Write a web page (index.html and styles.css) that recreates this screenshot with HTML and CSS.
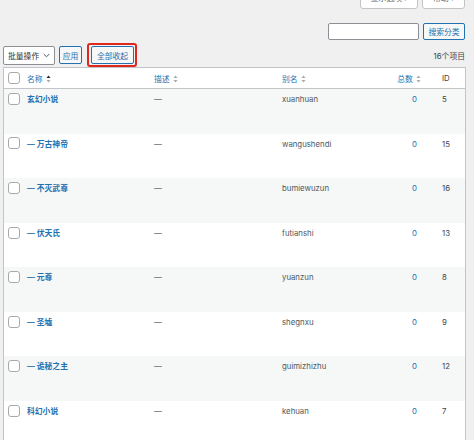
FILE: index.html
```html
<!DOCTYPE html>
<html lang="zh-CN">
<head>
    <meta charset="UTF-8">
    <meta name="viewport" content="width=device-width, initial-scale=1.0">
    <title>分类</title>
    <link rel="stylesheet" href="styles.css">
</head>
<body>
<div class="screen-meta">
    <button class="meta-tab">显示选项 <span class="tri">▾</span></button>
    <button class="meta-tab">帮助 <span class="tri">▾</span></button>
</div>

<div class="search-box">
    <input type="search" class="search-input">
    <button class="btn">搜索分类</button>
</div>

<div class="tablenav">
    <div class="bulk-select">批量操作
        <svg width="7" height="5" viewBox="0 0 7 5"><path d="M0.7 1 L3.5 3.8 L6.3 1" fill="none" stroke="#50575e" stroke-width="1"/></svg>
    </div>
    <button class="btn">应用</button>
    <div class="mark">
        <button class="btn">全部收起</button>
    </div>
    <div class="count">16个项目</div>
</div>

<table class="terms">
    <colgroup>
        <col style="width:17px">
        <col style="width:127px">
        <col style="width:128px">
        <col style="width:105px">
        <col style="width:55px">
        <col style="width:29px">
    </colgroup>
    <thead>
    <tr>
        <th class="cb"><span class="box"></span></th>
        <th><a>名称 <svg class="sort" viewBox="0 0 5 8"><path d="M2.5 0.5 L4.5 3 L0.5 3 Z" fill="#1d2327"/><path d="M0.5 5 L4.5 5 L2.5 7.5 Z" fill="#a7aaad"/></svg></a></th>
        <th><a>描述 <svg class="sort" viewBox="0 0 5 8"><path d="M2.5 0.5 L4.5 3 L0.5 3 Z" fill="#a7aaad"/><path d="M0.5 5 L4.5 5 L2.5 7.5 Z" fill="#a7aaad"/></svg></a></th>
        <th><a>别名 <svg class="sort" viewBox="0 0 5 8"><path d="M2.5 0.5 L4.5 3 L0.5 3 Z" fill="#a7aaad"/><path d="M0.5 5 L4.5 5 L2.5 7.5 Z" fill="#a7aaad"/></svg></a></th>
        <th class="num-h"><a>总数 <svg class="sort" viewBox="0 0 5 8"><path d="M2.5 0.5 L4.5 3 L0.5 3 Z" fill="#a7aaad"/><path d="M0.5 5 L4.5 5 L2.5 7.5 Z" fill="#a7aaad"/></svg></a></th>
        <th class="id">ID</th>
    </tr>
    </thead>
    <tbody>
    <tr>
        <td class="cb"><span class="box"></span></td>
        <td><a class="title">玄幻小说</a></td>
        <td class="muted">—</td>
        <td class="muted">xuanhuan</td>
        <td class="num"><a>0</a></td>
        <td class="id">5</td>
    </tr>
    <tr>
        <td class="cb"><span class="box"></span></td>
        <td><a class="title">— 万古神帝</a></td>
        <td class="muted">—</td>
        <td class="muted">wangushendi</td>
        <td class="num"><a>0</a></td>
        <td class="id">15</td>
    </tr>
    <tr>
        <td class="cb"><span class="box"></span></td>
        <td><a class="title">— 不灭武尊</a></td>
        <td class="muted">—</td>
        <td class="muted">bumiewuzun</td>
        <td class="num"><a>0</a></td>
        <td class="id">16</td>
    </tr>
    <tr>
        <td class="cb"><span class="box"></span></td>
        <td><a class="title">— 伏天氏</a></td>
        <td class="muted">—</td>
        <td class="muted">futianshi</td>
        <td class="num"><a>0</a></td>
        <td class="id">13</td>
    </tr>
    <tr>
        <td class="cb"><span class="box"></span></td>
        <td><a class="title">— 元尊</a></td>
        <td class="muted">—</td>
        <td class="muted">yuanzun</td>
        <td class="num"><a>0</a></td>
        <td class="id">8</td>
    </tr>
    <tr>
        <td class="cb"><span class="box"></span></td>
        <td><a class="title">— 圣墟</a></td>
        <td class="muted">—</td>
        <td class="muted">shegnxu</td>
        <td class="num"><a>0</a></td>
        <td class="id">9</td>
    </tr>
    <tr>
        <td class="cb"><span class="box"></span></td>
        <td><a class="title">— 诡秘之主</a></td>
        <td class="muted">—</td>
        <td class="muted">guimizhizhu</td>
        <td class="num"><a>0</a></td>
        <td class="id">12</td>
    </tr>
    <tr>
        <td class="cb"><span class="box"></span></td>
        <td><a class="title">科幻小说</a></td>
        <td class="muted">—</td>
        <td class="muted">kehuan</td>
        <td class="num"><a>0</a></td>
        <td class="id">7</td>
    </tr>
    </tbody>
</table>
</body>
</html>
```

FILE: styles.css
```css
* {
    box-sizing: border-box;
}

body,
html {
    margin: 0;
    padding: 0;
    background-color: #f0f0f1;
    font-family: "Inter", "Noto Sans CJK SC", sans-serif;
    font-size: 7.8px;
    color: #3c434a;
    overflow: hidden;
}

button,
input {
    font-family: inherit;
    font-size: inherit;
    margin: 0;
}

.screen-meta {
    display: flex;
    justify-content: flex-end;
    gap: 4px;
    padding-right: 9px;
    margin-top: -12px;
}

.meta-tab {
    height: 21px;
    padding: 0 0 2px;
    background-color: #fff;
    border: 1px solid #c3c4c7;
    border-radius: 0 0 3px 3px;
    color: #646970;
}

.meta-tab:first-child {
    width: 58px;
}

.meta-tab:last-child {
    width: 43px;
}

.tri {
    font-size: 6px;
}

.search-box {
    display: flex;
    justify-content: flex-end;
    gap: 4px;
    padding-right: 9px;
    margin-top: 14px;
}

.search-input {
    width: 91px;
    height: 17px;
    border: 1px solid #8c8f94;
    border-radius: 2px;
    background-color: #fff;
}

.btn {
    height: 18px;
    padding: 0 5px;
    background-color: #f6f7f7;
    border: 1px solid #2271b1;
    border-radius: 2px;
    color: #2271b1;
}

.search-box .btn {
    height: 17px;
    width: 42px;
    padding: 0;
}

.tablenav {
    display: flex;
    align-items: center;
    height: 24px;
    margin-top: 3px;
    padding: 0 9px 0 3px;
}

.bulk-select {
    display: flex;
    align-items: center;
    gap: 4px;
    width: 52px;
    height: 19px;
    padding-left: 4px;
    background-color: #fff;
    border: 1px solid #8c8f94;
    border-radius: 2px;
    color: #2c3338;
}

.tablenav > .btn {
    margin-left: 4px;
    width: 23px;
    padding: 0;
}

.mark {
    margin-left: 5px;
    padding: 1px 1px 1px 2px;
    border: 2px solid #e0271d;
    border-radius: 3px;
}

.mark .btn {
    width: 43px;
    padding: 0;
}

.count {
    margin-left: auto;
    color: #3c434a;
}

.terms {
    width: 463px;
    margin-left: 3px;
    table-layout: fixed;
    border-collapse: separate;
    border-spacing: 0;
    border: 1px solid #c3c4c7;
    background-color: #fff;
}

.terms th {
    height: 21px;
    padding: 0 6px;
    text-align: left;
    font-weight: normal;
    border-bottom: 1px solid #c3c4c7;
}

.terms th a {
    color: #2271b1;
}

.sort {
    width: 5px;
    height: 8px;
    margin-left: 1px;
    vertical-align: -1px;
}

.terms tbody tr {
    height: 44.57px;
}

.terms tbody tr:nth-child(odd) {
    background-color: #f6f7f7;
}

.terms td {
    vertical-align: top;
    padding: 4px 6px 0;
    line-height: 12px;
    white-space: nowrap;
}

.terms .cb {
    padding: 0;
    text-align: center;
}

.terms td.cb {
    padding-top: 3px;
}

.box {
    display: inline-block;
    width: 12px;
    height: 12px;
    margin-left: 2px;
    background-color: #fff;
    border: 1px solid #a7aaad;
    border-radius: 3px;
    vertical-align: middle;
}

.title {
    color: #2271b1;
    font-weight: 600;
}

.muted {
    color: #50575e;
}

.terms .num-h {
    text-align: right;
    padding-right: 15px;
}

.terms .num {
    text-align: right;
    padding-right: 19px;
}

.num a {
    color: #2271b1;
}

.terms .id {
    padding-left: 6px;
    color: #3c434a;
}
```
